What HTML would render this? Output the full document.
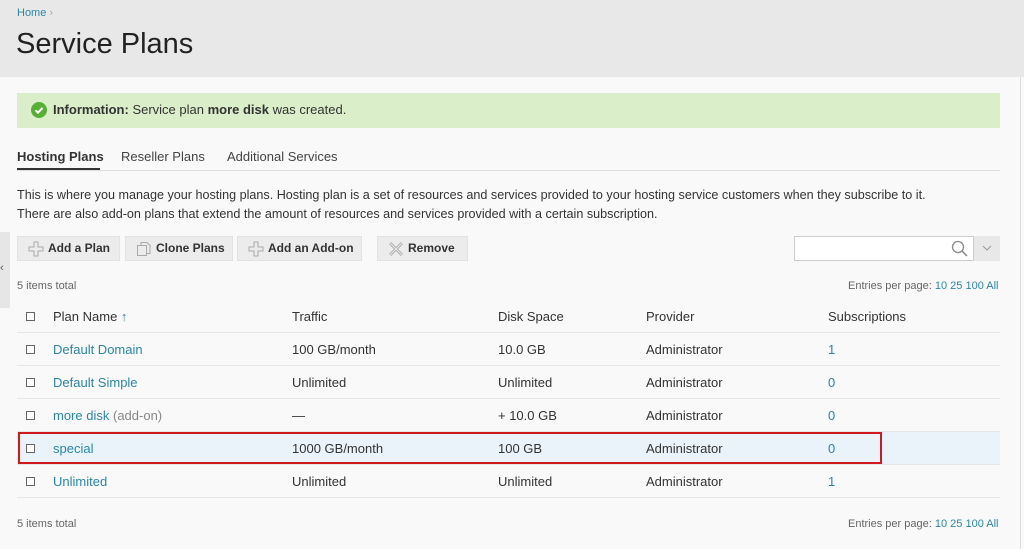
<!DOCTYPE html>
<html><head><meta charset="utf-8"><style>
*{box-sizing:border-box;margin:0;padding:0}
body{width:1024px;height:549px;overflow:hidden;background:#f9f9f9;font-family:"Liberation Sans","DejaVu Sans",sans-serif;font-size:13px;color:#333;position:relative}
.hdr{position:absolute;left:0;top:0;width:1024px;height:77px;background:#e8e8e8}
.abs{position:absolute;white-space:nowrap}
a{color:#2a86a8;text-decoration:none}
.btn{position:absolute;top:236px;height:25px;background:#ececec;border:1px solid #e2e2e2;font-size:12px;color:#333;font-weight:bold;line-height:23px;padding-left:30px}
.btn svg{position:absolute;left:10px;top:4px}
.row{position:absolute;left:17px;width:983px;height:33px;border-bottom:1px solid #e6e6e6}
.cb{position:absolute;left:9px;top:12px;width:9px;height:9px;border:1px solid #666;background:#fff}
.c{position:absolute;top:9px;font-size:13px;white-space:nowrap}
</style></head><body>
<div class="hdr"></div>
<div class="abs" style="left:17px;top:7px;font-size:11px"><a>Home</a> <span style="color:#aaa">›</span></div>
<div class="abs" style="left:16px;top:28px;font-size:29px;color:#222">Service Plans</div>
<div class="abs" style="left:17px;top:93px;width:983px;height:35px;background:#daeec9"></div>
<svg class="abs" style="left:31px;top:102px" width="16" height="16"><circle cx="8" cy="8" r="8" fill="#57b036"/><path d="M4.5 8.2l2.5 2.5 4.5-4.8" stroke="#fff" stroke-width="2" fill="none"/></svg>
<div class="abs" style="left:53px;top:102px;font-size:13px"><b>Information:</b> Service plan <b>more disk</b> was created.</div>
<div class="abs" style="left:17px;top:149px;font-size:13px;font-weight:bold;color:#333">Hosting Plans</div>
<div class="abs" style="left:17px;top:168px;width:83px;height:3px;background:#333"></div>
<div class="abs" style="left:121px;top:149px;font-size:13px;color:#444">Reseller Plans</div>
<div class="abs" style="left:227px;top:149px;font-size:13px;color:#444">Additional Services</div>
<div class="abs" style="left:17px;top:170px;width:983px;height:1px;background:#ddd"></div>
<div class="abs" style="left:17px;top:186px;font-size:12.6px;line-height:19px;color:#333">This is where you manage your hosting plans. Hosting plan is a set of resources and services provided to your hosting service customers when they subscribe to it.<br>There are also add-on plans that extend the amount of resources and services provided with a certain subscription.</div>
<div class="btn" style="left:17px;width:103px"><svg width="16" height="16"><path d="M6 1h4v5h5v4h-5v5H6v-5H1V6h5z" fill="none" stroke="#aaa"/></svg>Add a Plan</div>
<div class="btn" style="left:125px;width:108px"><svg width="16" height="16"><rect x="1.5" y="4.5" width="9" height="10" fill="none" stroke="#aaa"/><path d="M5 4.5V1.5h6l3 3v8h-3.5" fill="none" stroke="#aaa"/></svg>Clone Plans</div>
<div class="btn" style="left:237px;width:125px"><svg width="16" height="16"><path d="M6 1h4v5h5v4h-5v5H6v-5H1V6h5z" fill="none" stroke="#aaa"/></svg>Add an Add-on</div>
<div class="btn" style="left:377px;width:91px"><svg width="16" height="16"><path d="M2 2l12 12M14 2L2 14" stroke="#aaa" stroke-width="3"/><path d="M2 2l12 12M14 2L2 14" stroke="#ececec" stroke-width="1"/></svg>Remove</div>
<div class="abs" style="left:794px;top:236px;width:180px;height:25px;background:#fff;border:1px solid #ccc"></div>
<svg class="abs" style="left:951px;top:240px" width="18" height="18"><circle cx="7" cy="7" r="5.5" fill="none" stroke="#888" stroke-width="1.3"/><path d="M11 11l5 5" stroke="#888" stroke-width="1.5"/></svg>
<div class="abs" style="left:974px;top:236px;width:26px;height:25px;background:#e8e8e8"></div>
<svg class="abs" style="left:982px;top:244px" width="10" height="8"><path d="M1 2l4 4 4-4" stroke="#999" fill="none"/></svg>
<div class="abs" style="left:0;top:232px;width:10px;height:76px;background:#e6e6e6"></div>
<div class="abs" style="left:0;top:262px;font-size:11px;color:#555">‹</div>
<div class="abs" style="left:17px;top:280px;font-size:11px;color:#666">5 items total</div>
<div class="abs" style="left:848px;top:280px;font-size:11px;color:#666">Entries per page: <a>10</a> <a>25</a> <a>100</a> <a>All</a></div>
<div class="row" style="top:300px"><div class="cb"></div><div class="c" style="left:36px">Plan Name <span style="color:#2a86a8">↑</span></div><div class="c" style="left:275px">Traffic</div><div class="c" style="left:481px">Disk Space</div><div class="c" style="left:629px">Provider</div><div class="c" style="left:811px">Subscriptions</div></div>
<div class="row" style="top:333px"><div class="cb"></div><div class="c" style="left:36px"><a>Default Domain</a></div><div class="c" style="left:275px">100 GB/month</div><div class="c" style="left:481px">10.0 GB</div><div class="c" style="left:629px">Administrator</div><div class="c" style="left:811px"><a>1</a></div></div>
<div class="row" style="top:366px"><div class="cb"></div><div class="c" style="left:36px"><a>Default Simple</a></div><div class="c" style="left:275px">Unlimited</div><div class="c" style="left:481px">Unlimited</div><div class="c" style="left:629px">Administrator</div><div class="c" style="left:811px"><a>0</a></div></div>
<div class="row" style="top:399px"><div class="cb"></div><div class="c" style="left:36px"><a>more disk</a> <span style="color:#888">(add-on)</span></div><div class="c" style="left:275px">—</div><div class="c" style="left:481px">+ 10.0 GB</div><div class="c" style="left:629px">Administrator</div><div class="c" style="left:811px"><a>0</a></div></div>
<div class="row" style="top:432px;background:#eaf3f9"><div class="cb"></div><div class="c" style="left:36px"><a>special</a></div><div class="c" style="left:275px">1000 GB/month</div><div class="c" style="left:481px">100 GB</div><div class="c" style="left:629px">Administrator</div><div class="c" style="left:811px"><a>0</a></div></div>
<div class="row" style="top:465px"><div class="cb"></div><div class="c" style="left:36px"><a>Unlimited</a></div><div class="c" style="left:275px">Unlimited</div><div class="c" style="left:481px">Unlimited</div><div class="c" style="left:629px">Administrator</div><div class="c" style="left:811px"><a>1</a></div></div>
<div class="abs" style="left:18px;top:432px;width:864px;height:32px;border:2.5px solid #d0181f"></div>
<div class="abs" style="left:17px;top:518px;font-size:11px;color:#666">5 items total</div>
<div class="abs" style="left:848px;top:518px;font-size:11px;color:#666">Entries per page: <a>10</a> <a>25</a> <a>100</a> <a>All</a></div>
<div class="abs" style="left:1020px;top:77px;width:1px;height:472px;background:#ddd"></div>
</body></html>
